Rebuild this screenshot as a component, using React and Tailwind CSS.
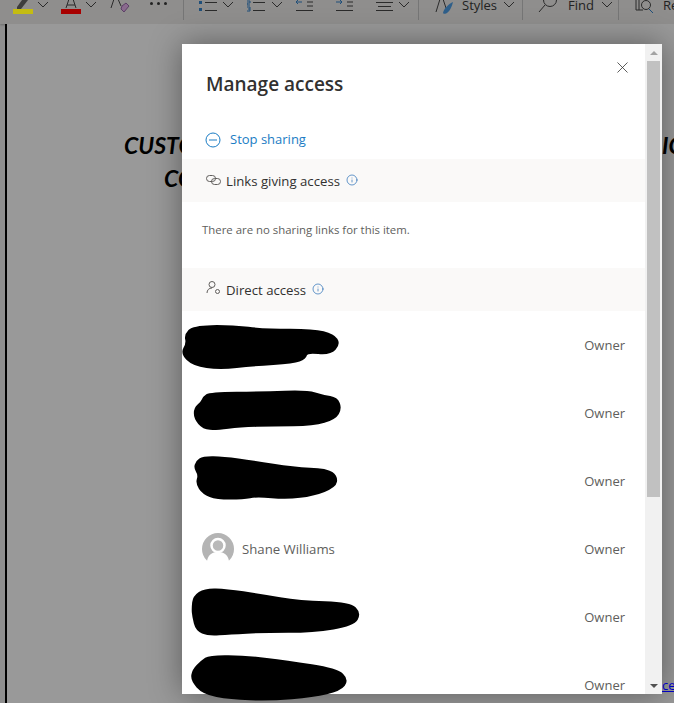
import { Info, X } from 'lucide-react';

const uiFont = "font-['Open_Sans','Noto_Sans',sans-serif]";

// outlines of the marker scribbles, in 3x px
const scribbles = {
  a: { box: '6 -27 570 204', pts: [[40,20],[150,18],[260,30],[400,30],[460,45],[478,72],[450,102],[380,95],[375,115],[340,128],[220,135],[120,146],[40,135],[5,100],[22,70],[16,45]] },
  b: { box: '6 177 570 204', pts: [[90,220],[250,218],[380,213],[430,228],[470,235],[482,265],[465,295],[400,315],[280,316],[180,318],[110,327],[70,325],[45,295],[45,265],[65,248],[72,232]] },
  c: { box: '6 381 570 204', pts: [[70,412],[130,413],[220,425],[340,445],[440,448],[470,470],[465,500],[400,525],[320,535],[230,527],[190,535],[110,535],[70,520],[50,490],[58,465],[45,445],[50,425]] },
  d: { box: '6 189 570 204', pts: [[75,208],[140,210],[240,225],[360,245],[510,250],[540,280],[520,315],[400,335],[250,335],[150,340],[85,345],[50,330],[40,290],[38,265],[42,230]] },
  e: { box: '6 393 570 204', pts: [[90,408],[200,410],[320,425],[470,448],[503,480],[480,510],[400,528],[270,540],[150,535],[70,520],[35,480],[40,450],[65,425]] },
};

const smooth = (pts) => {
  const mid = (p, q) => [(p[0] + q[0]) / 2, (p[1] + q[1]) / 2];
  const start = mid(pts[pts.length - 1], pts[0]);
  let d = `M${start[0]} ${start[1]}`;
  pts.forEach((p, i) => {
    const m = mid(p, pts[(i + 1) % pts.length]);
    d += ` Q${p[0]} ${p[1]} ${m[0]} ${m[1]}`;
  });
  return d + 'Z';
};

const Scribble = ({ k }) => (
  <svg width="190" height="68" viewBox={scribbles[k].box} className="shrink-0 overflow-visible">
    <path d={smooth(scribbles[k].pts)} fill="#000" stroke="#000" strokeWidth="7" />
  </svg>
);

const Chevron = ({ className }) => (
  <svg width="12" height="8" viewBox="0 0 12 8" fill="none" stroke="#2b2b2b" strokeWidth="1" className={`shrink-0 mt-[1px] ${className}`}>
    <path d="M1 1l5 5 5-5" />
  </svg>
);

const Divider = ({ className }) => <div className={`w-px h-5 shrink-0 bg-[#767676] ${className}`} />;

const Toolbar = () => (
  <div className={`h-6 shrink-0 flex items-start pl-[13px] bg-[#8f8e8d] shadow-[0_1px_2px_rgba(0,0,0,0.25)] overflow-hidden whitespace-nowrap text-[13px] leading-[20px] text-[#222] ${uiFont}`}>
    {/* highlight */}
    <svg width="20" height="16" viewBox="0 0 20 16" fill="none" className="shrink-0">
      <path d="M4 7l5-7h6l-7 9H4z" fill="#3d3d3d" />
      <rect x="0" y="9" width="20" height="5" fill="#c4bc12" />
    </svg>
    <Chevron className="ml-[4px]" />
    {/* font colour */}
    <svg width="20" height="16" viewBox="0 0 20 16" fill="none" className="shrink-0 ml-[12px]">
      <path d="M5 8L8 -1M15 8L12 -1M6 5h8" stroke="#2b2b2b" />
      <rect x="0" y="9" width="20" height="5" fill="#a80000" />
    </svg>
    <Chevron className="ml-[4px]" />
    {/* clear formatting */}
    <svg width="20" height="16" viewBox="0 0 20 16" fill="none" className="shrink-0 ml-[13px]" stroke="#2b2b2b">
      <path d="M1 8L4 -1M11 6L8 -1" />
      <path d="M12 6l4-3 3 3-5 6-3-3z" fill="#8a6a8e" stroke="#5c3f66" />
    </svg>
    <div className="ml-[20px] mt-[2px] flex gap-[4px] shrink-0">
      <span className="w-[3px] h-[3px] rounded-full bg-[#222]" />
      <span className="w-[3px] h-[3px] rounded-full bg-[#222]" />
      <span className="w-[3px] h-[3px] rounded-full bg-[#222]" />
    </div>
    <Divider className="ml-[16px]" />
    {/* bullets */}
    <svg width="19" height="12" viewBox="0 0 19 12" fill="none" className="shrink-0 ml-[15px]">
      <rect x="0" y="1" width="3" height="3" fill="#1f4f7a" />
      <rect x="0" y="8" width="3" height="3" fill="#1f4f7a" />
      <path d="M6 2.5h12M6 10.5h12" stroke="#2b2b2b" />
    </svg>
    <Chevron className="ml-[4px]" />
    {/* numbering */}
    <svg width="19" height="12" viewBox="0 0 19 12" fill="none" className="shrink-0 ml-[13px]">
      <path d="M0 1h3v2H0v2h3M0 7h3v4H0M1 9h2" stroke="#1f4f7a" />
      <path d="M6 2.5h12M6 10.5h12" stroke="#2b2b2b" />
    </svg>
    <Chevron className="ml-[5px]" />
    {/* outdent */}
    <svg width="19" height="12" viewBox="0 0 19 12" fill="none" className="shrink-0 ml-[12px]">
      <path d="M7 2H1m2-2L1 2l2 2" stroke="#1f4f7a" />
      <path d="M12 2h6M12 6h6M1 10.5h17" stroke="#2b2b2b" />
    </svg>
    {/* indent */}
    <svg width="19" height="12" viewBox="0 0 19 12" fill="none" className="shrink-0 ml-[21px]">
      <path d="M1 2h6m-2-2l2 2-2 2" stroke="#1f4f7a" />
      <path d="M12 2h6M12 6h6M1 10.5h17" stroke="#2b2b2b" />
    </svg>
    {/* align */}
    <svg width="19" height="12" viewBox="0 0 19 12" fill="none" className="shrink-0 ml-[21px]">
      <path d="M1 2.5h17M3 6.5h13M1 10.5h17" stroke="#2b2b2b" />
    </svg>
    <Chevron className="ml-[4px]" />
    <Divider className="ml-[8px]" />
    {/* styles */}
    <svg width="20" height="17" viewBox="0 0 20 17" fill="none" className="shrink-0 ml-[16px]">
      <path d="M1 12L5 -1M11 8L8 -1" stroke="#2b2b2b" />
      <path d="M8 13c1-5 6-9 10-11-1 4-3 9-6 11-1 1-4 1-4 0z" fill="#2f5f8a" />
    </svg>
    <span className="ml-[7px] -mt-[5px] w-[35px] shrink-0">Styles</span>
    <Chevron className="ml-[6px]" />
    <Divider className="ml-[7px]" />
    {/* find */}
    <svg width="20" height="14" viewBox="0 0 20 14" fill="none" stroke="#2b2b2b" className="shrink-0 ml-[15px]">
      <circle cx="12" cy="0" r="6.5" />
      <path d="M7 5l-6 7" />
    </svg>
    <span className="ml-[10px] -mt-[5px] w-[25px] shrink-0">Find</span>
    <Chevron className="ml-[8px]" />
    <Divider className="ml-[5px]" />
    {/* reading view */}
    <svg width="20" height="14" viewBox="0 0 20 14" fill="none" className="shrink-0 ml-[16px]">
      <path d="M1 0v10h7M4 0v10" stroke="#2b2b2b" />
      <circle cx="11" cy="5" r="4.5" stroke="#2b2b2b" />
      <path d="M14 9l4 4" stroke="#1f4f7a" />
    </svg>
    <span className="ml-[8px] -mt-[5px] shrink-0">Re</span>
  </div>
);

const Document = () => (
  <div className="flex-1 bg-[#999999] border-l-[2px] border-black ml-[5px] overflow-hidden">
    <div className="pl-[117px] pt-[105px] font-['Lato',sans-serif] font-bold italic text-[23px] leading-[33px] text-black whitespace-nowrap">
      <div className="flex">
        <span className="w-[538px] shrink-0">CUSTOM</span>
        <span className="shrink-0">IC</span>
      </div>
      <div className="pl-[40px]">CO</div>
    </div>
  </div>
);

const SectionHead = ({ icon, label }) => (
  <div className="h-[43px] bg-[#faf9f8] flex items-center pl-6">
    {icon}
    <span className="ml-[5px] pt-[3px] text-[13.2px] text-[#323130]">{label}</span>
    <Info size={12} strokeWidth={1.25} className="ml-[6px] -mt-[1px] text-[#0b5cad]" />
  </div>
);

const Row = ({ scribble, avatar }) => (
  <div className="h-[68px] flex items-center justify-between pr-5">
    {scribble ? (
      <Scribble k={scribble} />
    ) : (
      <div className="flex items-center pl-5">
        {avatar}
        <span className="ml-2 pt-[2px] text-[13.2px] text-[#605e5c]">Shane Williams</span>
      </div>
    )}
    <span className="pt-[2px] text-[13px] text-[#605e5c]">Owner</span>
  </div>
);

const Avatar = () => (
  <svg width="32" height="32" viewBox="0 0 32 32">
    <circle cx="16" cy="16" r="16" fill="#b4b4b4" />
    <path d="M5 28c1-6 5-9 11-9s10 3 11 9v5H5z" fill="#fff" />
    <circle cx="16" cy="12.5" r="6.5" fill="#b9b9b9" stroke="#fff" strokeWidth="2.5" />
  </svg>
);

const Modal = () => (
  <div className={`absolute left-[182px] top-[44px] w-[480px] h-[650px] flex bg-white shadow-[0_0_30px_rgba(0,0,0,0.4)] ${uiFont}`}>
    <div className="flex-1 min-w-0">
      <div className="h-[115px] relative">
        <h1 className="pl-6 pt-[25px] text-[19px] leading-[30px] font-semibold text-[#323130]">Manage access</h1>
        <X size={19} strokeWidth={1} className="absolute right-[13px] top-[14px] text-[#323130]" />
        <div className="flex items-center pl-[23px] mt-[31px]">
          <svg width="16" height="16" viewBox="0 0 16 16" fill="none" stroke="#1a7cc4">
            <circle cx="8" cy="8" r="7" />
            <path d="M4 8h8" />
          </svg>
          <span className="ml-[9px] text-[13px] text-[#1a7cc4]">Stop sharing</span>
        </div>
      </div>
      <SectionHead
        label="Links giving access"
        icon={
          <svg width="15" height="12" viewBox="0 0 15 12" fill="none" stroke="#605e5c" className="-mt-[1px]">
            <rect x="0.5" y="1.5" width="9" height="6" rx="3" />
            <rect x="5.5" y="4.5" width="9" height="6" rx="3" />
          </svg>
        }
      />
      <div className="h-[66px] flex items-center pl-5 pb-[10px]">
        <span className="text-[11.4px] text-[#605e5c]">There are no sharing links for this item.</span>
      </div>
      <SectionHead
        label="Direct access"
        icon={
          <svg width="15" height="14" viewBox="0 0 15 14" fill="none" stroke="#605e5c" className="-mt-[3px]">
            <circle cx="6" cy="3.5" r="3" />
            <path d="M1 12c0-3 2-5 5-5" />
            <circle cx="11.5" cy="10.5" r="2" />
          </svg>
        }
      />
      <Row scribble="a" />
      <Row scribble="b" />
      <Row scribble="c" />
      <Row avatar={<Avatar />} />
      <Row scribble="d" />
      <Row scribble="e" />
    </div>
    {/* scrollbar */}
    <div className="w-[17px] shrink-0 bg-[#f1f1f1] flex flex-col items-center">
      <div className="h-[17px] flex items-center">
        <div className="w-0 h-0 border-x-[4px] border-x-transparent border-b-[4px] border-b-[#a3a3a3]" />
      </div>
      <div className="w-[13px] h-[436px] bg-[#c1c1c1]" />
      <div className="flex-1" />
      <div className="h-[17px] flex items-center">
        <div className="w-0 h-0 border-x-[4px] border-x-transparent border-t-[4px] border-t-[#505050]" />
      </div>
    </div>
  </div>
);

export default function App() {
  return (
    <div className="relative w-[674px] h-[703px] overflow-hidden flex flex-col bg-[#8e8e8e]">
      <Toolbar />
      <Document />
      <Modal />
      <span className="absolute left-[662px] top-[676px] text-[13px] text-[#0000c0] underline font-['Open_Sans',sans-serif]">ce</span>
    </div>
  );
}
